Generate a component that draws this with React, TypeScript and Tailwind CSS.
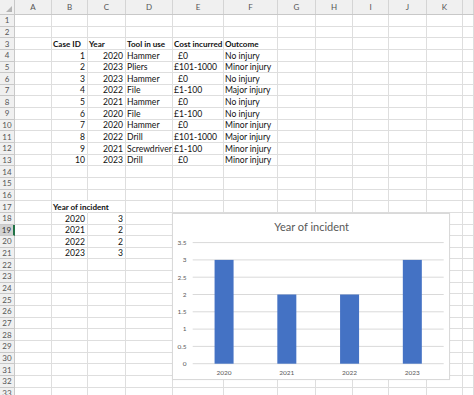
const COLS = [
  { key: "A", w: 37 },
  { key: "B", w: 36 },
  { key: "C", w: 38 },
  { key: "D", w: 47 },
  { key: "E", w: 51 },
  { key: "F", w: 54 },
  { key: "G", w: 38 },
  { key: "H", w: 37 },
  { key: "I", w: 36 },
  { key: "J", w: 38 },
  { key: "K", w: 36 },
  { key: "L", w: 11 },
];

type Cell = { text: string; align?: "left" | "right"; bold?: boolean; indent?: boolean; overflow?: boolean };

const cases: [number, number, string, string, string][] = [
  [1, 2020, "Hammer", "£0", "No injury"],
  [2, 2023, "Pliers", "£101-1000", "Minor injury"],
  [3, 2023, "Hammer", "£0", "No injury"],
  [4, 2022, "File", "£1-100", "Major injury"],
  [5, 2021, "Hammer", "£0", "No injury"],
  [6, 2020, "File", "£1-100", "No injury"],
  [7, 2020, "Hammer", "£0", "Minor injury"],
  [8, 2022, "Drill", "£101-1000", "Major injury"],
  [9, 2021, "Screwdriver", "£1-100", "Minor injury"],
  [10, 2023, "Drill", "£0", "Minor injury"],
];

const counts: [number, number][] = [
  [2020, 3],
  [2021, 2],
  [2022, 2],
  [2023, 3],
];

function buildSheet() {
  const sheet: Record<number, Record<string, Cell>> = {};
  sheet[3] = {
    B: { text: "Case ID", bold: true },
    C: { text: "Year", bold: true },
    D: { text: "Tool in use", bold: true },
    E: { text: "Cost incurred", bold: true },
    F: { text: "Outcome", bold: true },
  };
  cases.forEach(([id, year, tool, cost, outcome], i) => {
    sheet[4 + i] = {
      B: { text: String(id), align: "right" },
      C: { text: String(year), align: "right" },
      D: { text: tool },
      E: { text: cost, indent: cost === "£0" },
      F: { text: outcome },
    };
  });
  sheet[17] = { B: { text: "Year of incident", bold: true, overflow: true } };
  counts.forEach(([year, n], i) => {
    sheet[18 + i] = {
      B: { text: String(year), align: "right" },
      C: { text: String(n), align: "right" },
    };
  });
  return sheet;
}

const sheet = buildSheet();
const rows = Array.from({ length: 33 }, (_, i) => i + 1);

function Chart() {
  const y0 = 149.7;
  const step = 17.3;
  const ticks = [0, 0.5, 1, 1.5, 2, 2.5, 3, 3.5];
  const band = 62.75;
  return (
    <div className="absolute left-[172px] top-[213px] h-[167px] w-[278px] border border-[#d9d9d9] bg-white shadow-[0_0_1px_rgba(0,0,0,0.08)]">
      <svg width="278" height="167" className="block" style={{ fontFamily: "Lato, 'Liberation Sans', sans-serif" }}>
        <text x="138.7" y="17" textAnchor="middle" fontSize="11" fill="#595959">
          Year of incident
        </text>
        {ticks.map((t) => {
          const y = y0 - (t / 0.5) * step;
          return (
            <g key={t}>
              <line x1="19.7" x2="270.7" y1={y} y2={y} stroke="#d9d9d9" strokeWidth="1" />
              <text x="13.5" y={y + 2.3} textAnchor="end" fontSize="6.5" fill="#595959">
                {t}
              </text>
            </g>
          );
        })}
        {counts.map(([year, n], i) => {
          const cx = 19.7 + band * (i + 0.5);
          const top = y0 - (n / 0.5) * step;
          return (
            <g key={year}>
              <rect x={cx - 9.5} y={top} width="19" height={y0 - top} fill="#4472c4" />
              <text x={cx} y="161" textAnchor="middle" fontSize="6.5" fill="#595959">
                {year}
              </text>
            </g>
          );
        })}
      </svg>
    </div>
  );
}

export default function App() {
  return (
    <div
      className="relative h-[395px] w-[474px] overflow-hidden bg-white text-[8.6px] text-[#111]"
      style={{ fontFamily: "Lato, 'Liberation Sans', sans-serif" }}
    >
      {/* column headers */}
      <div className="flex h-[15px] border-b border-[#c8c8c8] bg-[#f0f0f0]">
        <div className="relative w-[15px] shrink-0 border-r border-[#c8c8c8]">
          <svg width="6" height="6" className="absolute bottom-[2px] right-[2px]">
            <polygon points="6,0 6,6 0,6" fill="#b4b4b4" />
          </svg>
        </div>
        {COLS.map((c) => (
          <div
            key={c.key}
            className="flex shrink-0 items-center justify-center border-r border-[#d4d4d4] text-[8px] text-[#555]"
            style={{ width: c.w }}
          >
            {c.key === "L" ? "" : c.key}
          </div>
        ))}
      </div>

      {rows.map((r) => {
        const cells = sheet[r] ?? {};
        const selected = r === 19;
        return (
          <div key={r} className="flex h-[11.65px]">
            <div
              className={
                selected
                  ? "flex w-[15px] shrink-0 items-center justify-center border-r-2 border-b border-r-[#217346] border-b-[#c8c8c8] bg-[#d2d2d2] text-[8px] leading-none text-[#333]"
                  : "flex w-[15px] shrink-0 items-center justify-center border-r border-b border-[#c8c8c8] bg-[#f0f0f0] text-[8px] leading-none text-[#555]"
              }
            >
              {r}
            </div>
            {COLS.map((c) => {
              const cell = cells[c.key];
              return (
                <div
                  key={c.key}
                  className={
                    "relative flex shrink-0 items-end border-b border-[#dedede] leading-[10px] whitespace-nowrap " +
                    (cell?.overflow ? "z-10 border-r border-r-transparent " : "overflow-hidden border-r border-r-[#dedede] ") +
                    (cell?.align === "right" ? "justify-end pr-[2px] " : "justify-start pl-[1px] ") +
                    (cell?.bold ? "text-[8.1px] font-bold " : "") +
                    (cell?.indent ? "pl-[5px] " : "")
                  }
                  style={{ width: c.w }}
                >
                  {cell?.text}
                </div>
              );
            })}
          </div>
        );
      })}

      <Chart />
    </div>
  );
}
